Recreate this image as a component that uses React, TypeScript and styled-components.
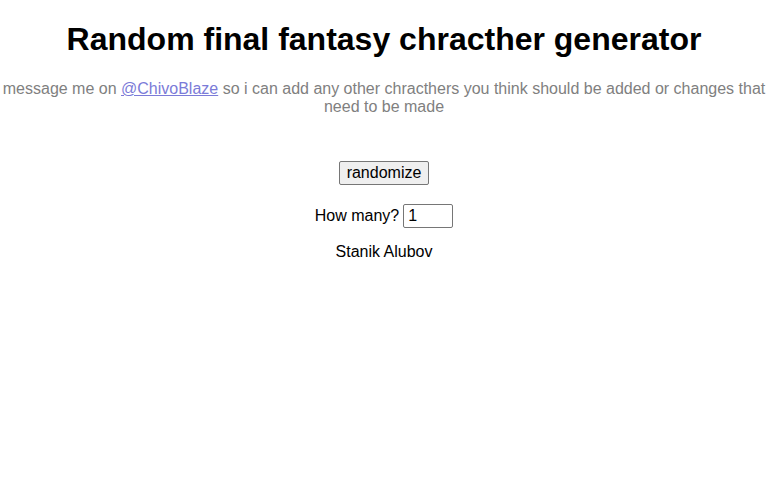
import React, { useState } from 'react';
import styled, { createGlobalStyle } from 'styled-components';

const GlobalStyle = createGlobalStyle`
	body {
		margin: 0;
		font-family: "Liberation Sans", Arial, sans-serif;
		background: #fff;
		color: #000;
	}
`

const names = ['Stanik Alubov'];

export default function App() {
	const [count, setCount] = useState('1');
	const [picked, setPicked] = useState(names[0]);

	return (
		<Page>
			<GlobalStyle />
			<Title>Random final fantasy chracther generator</Title>
			<Note>
				message me on <NoteLink href="#">@ChivoBlaze</NoteLink> so i can add any other chracthers you think should be added or changes that need to be made
			</Note>
			<Controls>
				<RandomButton onClick={() => setPicked(names[Math.floor(Math.random() * names.length)])}>
					randomize
				</RandomButton>
				<CountRow>
					How many?
					<CountInput value={count} onChange={e => setCount(e.target.value)} />
				</CountRow>
				<Result>{picked}</Result>
			</Controls>
		</Page>
	);
}

const Page = styled.div`
	text-align: center;
`

const Title = styled.h1`
	font-size: 32px;
	font-weight: 700;
	margin: 21px 0 22px;
	line-height: 37px;
`

const Note = styled.p`
	color: #808080;
	font-size: 16px;
	line-height: 18px;
	margin: 0 2px;
`

const NoteLink = styled.a`
	color: #7b7bd8;
	text-decoration: underline;
`

const Controls = styled.div`
	display: flex;
	flex-direction: column;
	align-items: center;
	padding-top: 45px;
`

const RandomButton = styled.button`
	font-family: "Liberation Sans", Arial, sans-serif;
	font-size: 16px;
	height: 24px;
	padding: 1px 7px;
	background: #efefef;
	border: 1px solid #767676;
	border-radius: 2px;
	color: #000;
`

const CountRow = styled.label`
	display: flex;
	align-items: center;
	gap: 4px;
	margin-top: 19px;
	font-size: 16px;
`

const CountInput = styled.input`
	width: 42px;
	height: 22px;
	padding: 0 2px 0 4px;
	font-family: "Liberation Sans", Arial, sans-serif;
	font-size: 16px;
	border: 1px solid #767676;
	border-radius: 2px;
	box-sizing: content-box;
`

const Result = styled.p`
	margin: 15px 0 0;
	font-size: 16px;
	line-height: 18px;
`
